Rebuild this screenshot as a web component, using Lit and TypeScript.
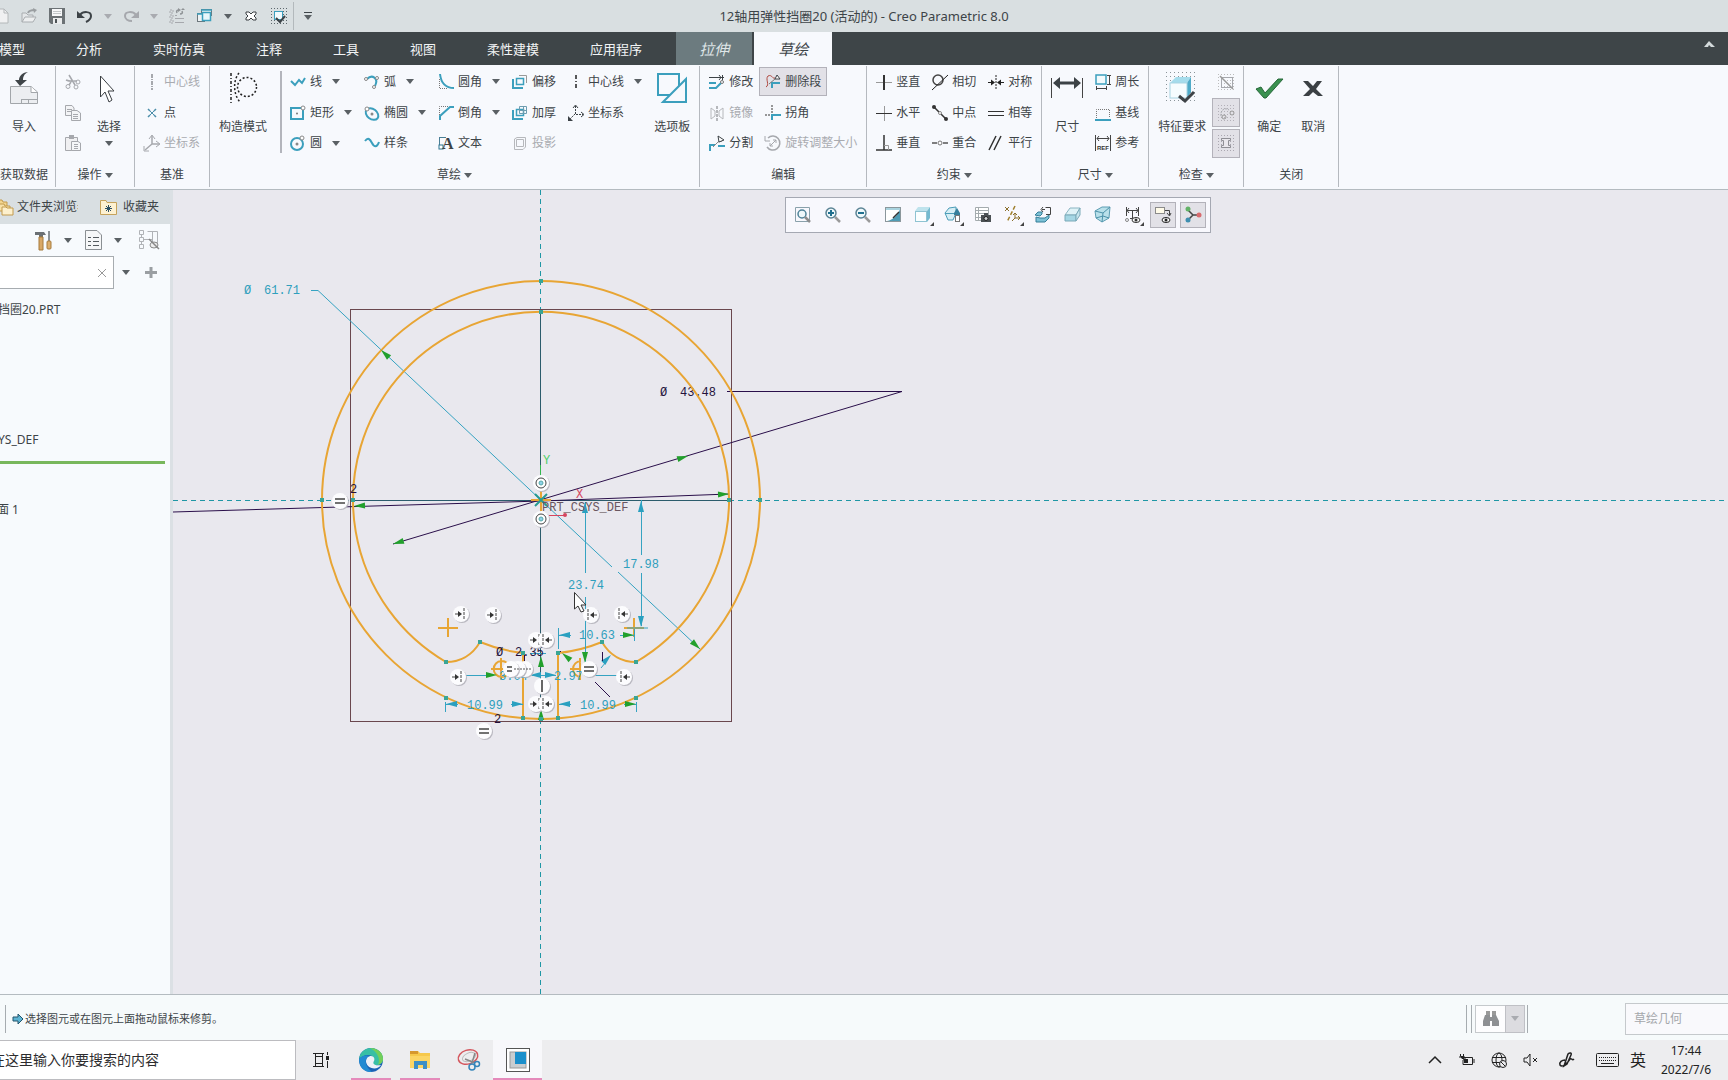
import { LitElement, html, css, svg, nothing, TemplateResult } from "lit";
import { customElement } from "lit/decorators.js";
import { classMap } from "lit/directives/class-map.js";

const T = "#3b9fbd"; // teal stroke
const K = "#3c4246"; // dark stroke
const G = "#a6a8ad"; // disabled stroke

const ico = (size: number, body: unknown, w = size) =>
  html`<svg class="ico" width=${w} height=${size} viewBox="0 0 ${w} ${size}" fill="none" aria-hidden="true">${body}</svg>`;

const caret = html`<svg class="caret" width="8" height="5" viewBox="0 0 8 5" aria-hidden="true"><path d="M0 0H8L4 5Z" fill="currentColor" /></svg>`;

const dots = (n: number, step: number, color: string) =>
  Array.from({ length: n * n }, (_, i) => {
    const x = (i % n) * step, y = Math.floor(i / n) * step;
    return svg`<rect x=${x} y=${y} width="1" height="1" fill=${color} />`;
  });

/* ---------- quick access ---------- */
const qNew = ico(16, svg`<path d="M1 1H11L15 5V15H1Z" fill="#f0f1f2" stroke="#b4b8ba"/><path d="M11 1V5H15" stroke="#b4b8ba"/>`);
const qOpen = ico(16, svg`<path d="M1 14V5H5L7 7H12V9" fill="#e4e7e9" stroke="#a9adb0"/><path d="M1 14L4 9H15L12 14Z" fill="#eceeef" stroke="#a9adb0"/><path d="M7 5C8 2 11 2 14 2" stroke="#9a9ea1" stroke-width="2"/><path d="M12 0L16 2L13 5Z" fill="#9a9ea1"/>`);
const qSave = ico(16, svg`<path d="M0 0H16V16H2L0 14Z" fill="#6c7275"/><rect x="3" y="1" width="10" height="7" fill="#f7f8f9"/><path d="M4 3.500H12M4 5.500H12" stroke="#c3c7c9"/><rect x="4" y="10" width="9" height="6" fill="#e9ebec"/><rect x="6" y="11" width="2" height="4" fill="#4d5356"/>`);
const qUndo = ico(16, svg`<path d="M3 7C6 3 14 3 14 8C14 11 11 13 9 14" stroke="${K}" stroke-width="2"/><path d="M0 3V10H8Z" fill="${K}"/>`);
const qRedo = ico(16, svg`<path d="M13 7C10 3 2 3 2 8C2 11 5 13 9 13" stroke="${G}" stroke-width="2"/><path d="M16 3V10H8Z" fill="${G}"/>`);
const qRegen = ico(16, svg`<path d="M1 2H4V5H1ZM1 7H4V10H1ZM1 12H4V15H1Z" stroke="${G}" stroke-dasharray="2 1"/><path d="M6 10.500H15M6 14.500H15M6 7.500H8" stroke="${G}"/><path d="M8 5C7 3 8 2 10 2M13 3C14 5 13 6 11 6" stroke="#8f9396" stroke-width="1.500"/><path d="M9 0L12 2L9 4ZM12 2H16L14 0Z" fill="#8f9396"/>`);
const qWin = ico(16, svg`<rect x="4.500" y="1.500" width="10" height="6" fill="#eef3f5" stroke="#6d777c"/><path d="M4 2H15" stroke="${T}" stroke-width="1.500"/><rect x="0.500" y="5.500" width="7" height="8" fill="#eef3f5" stroke="#6d777c"/><path d="M0 6H8" stroke="${T}" stroke-width="1.500"/><rect x="5.500" y="4.500" width="8" height="8" fill="#e8f7fb" stroke="${T}" stroke-width="1.500"/>`);
const qClose = ico(16, svg`<path d="M3 4H6L8 6L10 4H13V6L11 8L13 10V12H10L8 10L6 12H3V10L5 8L3 6Z" fill="#fff" stroke="#3a3f42"/>`);
const qCheck = ico(16, svg`${dots(6, 3, "#5d686d")}<rect x="3.500" y="3.500" width="8" height="8" fill="#f2fafd" stroke="${T}"/><path d="M5 10L9 14L14 8" stroke="#3c4347" stroke-width="2"/>`);

/* ---------- ribbon ---------- */
const scissors = ico(16, svg`<path d="M4 1L10 11M1 6C5 8 9 7 12 7M6 8L4 11" stroke="${G}" stroke-width="1.500"/><circle cx="11" cy="13" r="2" stroke="${G}"/><circle cx="3" cy="12.500" r="2" stroke="${G}"/><circle cx="13" cy="8" r="2" stroke="${G}"/>`);
const copy = ico(16, svg`<path d="M0.500 0.500H7L9 3V10.500H0.500Z" fill="#f3f4f6" stroke="${G}"/><path d="M2 4.500H7M2 6.500H6" stroke="${G}"/><path d="M6.500 5.500H12L15.500 8V15.500H6.500Z" fill="#f3f4f6" stroke="${G}"/><path d="M8 9.500H13M8 11.500H13M8 13.500H13" stroke="${G}"/>`);
const paste = ico(16, svg`<path d="M0.500 2.500H12.500V15.500H0.500Z" fill="#f0f0f2" stroke="${G}"/><rect x="4" y="0" width="5" height="4" fill="${G}"/><path d="M6.500 6.500H13L15.500 8V15.500H6.500Z" fill="#f5f6f8" stroke="${G}"/><path d="M9 9.500H13M9 11.500H13M9 13.500H13" stroke="${G}"/>`);
const importI = ico(32, svg`<path d="M2.500 14.500H23L29.500 20V31.500H2.500Z" fill="#eceef1" stroke="#a2a6aa"/><path d="M23 14.500V20.500H29" fill="#fff" stroke="#a2a6aa"/><path d="M13 27.500H29M13.500 27V31M20.500 27V31" stroke="#a2a6aa"/><path d="M20 0C15 0 11 4 11 8H7L12 14L19 8H15C15 5 16 2 20 0Z" fill="#3f4549"/>`);
const pointer = ico(32, svg`<path d="M7.500 4V25L12 20L16 30L19 28L15 19H21Z" fill="#fff" stroke="#3b3f43"/>`);
const datumLine = ico(16, svg`<path d="M8 0V16" stroke="${G}" stroke-width="2" stroke-dasharray="4 1 1 1"/>`);
const datumPt = ico(16, svg`<path d="M4 4L12 12M12 4L4 12" stroke="#4d8fab" stroke-width="1"/><path d="M4 4L6 6M12 4L10 6M4 12L6 10M12 12L10 10" stroke="#4d8fab" stroke-width="1.500"/>`);
const datumCs = ico(16, svg`<path d="M8 1V9L1 15M8 9H15" stroke="${G}" stroke-width="1.500"/><path d="M5 4L8 0L11 4M12 6L16 9L12 12M0 11V16H5" stroke="${G}"/>`);
const construct = ico(32, svg`<path d="M4 1V31" stroke="#222" stroke-width="1.500" stroke-dasharray="3 2 1 2"/><path d="M12 1C6 8 6 22 13 30" stroke="#222" stroke-width="1.500" stroke-dasharray="2 2"/><circle cx="20" cy="15" r="9.500" stroke="#222" stroke-width="1.500" stroke-dasharray="2 2"/>`);
const line = ico(16, svg`<path d="M1 5L5 9L9 4L12 7L15 2" transform="translate(0 2)" stroke="${T}" stroke-width="2"/>`);
const rect = ico(16, svg`<rect x="1" y="3" width="12" height="11" stroke="${T}" stroke-width="2"/><circle cx="7" cy="8.500" r="1" fill="#777"/><circle cx="13" cy="3" r="2" fill="#fff" stroke="#888"/>`);
const circle = ico(16, svg`<circle cx="7" cy="9" r="6" stroke="${T}" stroke-width="2"/><circle cx="7" cy="9" r="1.500" fill="#888"/><circle cx="12" cy="3" r="2" fill="#fff" stroke="#888"/>`);
const arc = ico(16, svg`<path d="M3 5C8 0 15 4 11 12" stroke="${T}" stroke-width="2"/><circle cx="2" cy="5" r="1.500" fill="#fff" stroke="#888"/><circle cx="13" cy="4" r="1.500" fill="#fff" stroke="#888"/><circle cx="10" cy="13" r="1.500" fill="#fff" stroke="#888"/>`);
const ellipse = ico(16, svg`<ellipse cx="8" cy="9" rx="7" ry="5" transform="rotate(38 8 9)" stroke="${T}" stroke-width="2"/><circle cx="8" cy="9" r="1.500" fill="#888"/><circle cx="3" cy="4" r="2" fill="#fff" stroke="#888"/>`);
const spline = ico(16, svg`<path d="M1 6C4 2 6 4 8 8C10 12 13 13 15 7" stroke="${T}" stroke-width="2"/>`);
const fillet = ico(16, svg`<path d="M2 0C3 9 7 14 16 14" stroke="${T}" stroke-width="2"/><path d="M1.500 5V14.500H9" stroke="#777" stroke-dasharray="1 1"/>`);
const chamfer = ico(16, svg`<path d="M2 15V11L12 2H16" stroke="${T}" stroke-width="2"/><path d="M1.500 10V1.500H11" stroke="#777" stroke-dasharray="1 1"/>`);
const textI = html`<svg class="ico" width="16" height="16" viewBox="0 0 16 16" fill="none" aria-hidden="true"><path d="M1.500 2V10M1 2.500H8" stroke="#4a7f96"/><rect x="1" y="10" width="4" height="4" fill="#fff" stroke="#2b7492"/><text x="4" y="14" font-family="Liberation Serif, serif" font-weight="700" font-size="16" fill="#3c4246">A</text></svg>`;
const offset = ico(16, svg`<path d="M1 5V14H11" stroke="${T}" stroke-width="2"/><path d="M4.500 4.500H11.500V10.500H4.500Z" stroke="${T}" stroke-width="1.500"/><path d="M7 1.500H14.500V9" stroke="#999"/>`);
const thicken = ico(16, svg`<path d="M1 5V14H11" stroke="${T}" stroke-width="2"/><path d="M4.500 4.500H11.500V10.500H4.500Z" stroke="${T}" stroke-width="1.500"/><path d="M7.500 1.500H14.500V8.500H7.500ZM11.500 1V8M8 5.500H15" stroke="#6d9db0"/>`);
const project = ico(16, svg`<path d="M2.500 4L5 2.500H13.500V12L11 14.500H2.500ZM4.500 4.500H11.500V11.500H4.500Z" stroke="#b6b8bc"/>`);
const cline = ico(16, svg`<path d="M8 1V16" stroke="#222" stroke-width="1.500" stroke-dasharray="4 2 1 2"/>`);
const csys = ico(16, svg`<path d="M7.500 1V9.500H15M7 9L1 15" stroke="${K}" stroke-dasharray="2 1"/><path d="M5 3L7.500 0L10 3M13 7L16 9.500L13 12" stroke="${K}"/><path d="M0 11V16H5Z" fill="${K}"/>`);
const palette = ico(32, svg`<path d="M2 2H23V23H2Z" stroke="${T}" stroke-width="2"/><path d="M7 30L30 7V30Z" fill="#f7f9fd" stroke="${T}" stroke-width="2"/>`);
const modify = ico(16, svg`<path d="M0 3.500H15M13.500 1V6M10 1L12 3.500L10 6" stroke="${K}"/><path d="M0 9H7M0 14H7L12 9" stroke="${T}" stroke-width="2"/><circle cx="13" cy="8" r="1.500" stroke="#777"/>`);
const mirror = ico(16, svg`<path d="M2 3L6 6V11L2 14ZM14 3L10 6V11L14 14Z" stroke="#b6b8bc"/><path d="M8 1V16" stroke="#b6b8bc" stroke-width="2" stroke-dasharray="3 1"/>`);
const divide = ico(16, svg`<path d="M1 16V10H6M9 11H16" stroke="${T}" stroke-width="2"/><path d="M4 12L9 7L13 6" stroke="#888"/><path d="M9 1L15 5L10 7Z" fill="#fff" stroke="${K}"/>`);
const delSeg = ico(16, svg`<path d="M1 13C5 11 0 5 3 2C7 0 7 5 10 4" stroke="#b0483f"/><path d="M7 14V9H15" stroke="${T}" stroke-width="2"/><path d="M10 5L12 1L15 5Z" fill="#fff" stroke="${K}"/><path d="M4 10L10 5" stroke="#777"/>`);
const corner = ico(16, svg`<path d="M7 15V10H16" stroke="${T}" stroke-width="2"/><path d="M7 0V8M0 10H5" stroke="#777" stroke-width="1.500" stroke-dasharray="2 1"/>`);
const rotate = ico(16, svg`<path d="M3 3A7 7 0 1 1 2 12" stroke="${G}" stroke-width="1.500"/><path d="M0 1V6H5M5 11L11 5M8 5H11V8M5 8V11H8" stroke="${G}"/>`);
const vert = ico(16, svg`<path d="M0 8.500H16" stroke="#999"/><path d="M8 1V16" stroke="#333" stroke-width="2"/>`);
const horiz = ico(16, svg`<path d="M8.500 1V16" stroke="#999"/><path d="M0 8.500H16" stroke="#333"/>`);
const perp = ico(16, svg`<path d="M8 0V15M0 15H16" stroke="#333" stroke-width="1.500"/><path d="M8 10.500H12.500V15" stroke="#999"/>`);
const tangent = ico(16, svg`<circle cx="6" cy="6" r="5" stroke="#444" stroke-width="1.500"/><path d="M0 16L16 1" stroke="#222"/>`);
const mid = ico(16, svg`<path d="M2 2L14 14" stroke="#333" stroke-width="1.500"/><circle cx="2" cy="2" r="2" fill="#333"/><circle cx="14" cy="14" r="2" fill="#333"/><circle cx="8" cy="8" r="1.500" fill="#fff" stroke="#888"/>`);
const coinc = ico(16, svg`<path d="M0 8H5M11 8H16" stroke="#555" stroke-width="1.500"/><circle cx="8" cy="8" r="2" fill="#fff" stroke="#777"/>`);
const symm = ico(16, svg`<path d="M8 1V16" stroke="#222" stroke-dasharray="2 1"/><path d="M0 8.500H5M11 8.500H16" stroke="#222"/><path d="M3 5.500L7 8.500L3 11.500ZM13 5.500L9 8.500L13 11.500Z" fill="#222"/>`);
const equal = ico(16, svg`<path d="M0 6.500H16M0 10.500H16" stroke="#333"/>`);
const para = ico(16, svg`<path d="M1 15L8 1M6 15L13 1" stroke="#333" stroke-width="1.500"/>`);
const dim = ico(32, svg`<path d="M0.500 6V26M31.500 6V26" stroke="#444"/><path d="M6 11H26" stroke="#3c4246" stroke-width="3"/><path d="M2 11L9 5V17ZM30 11L23 5V17Z" fill="#3c4246"/>`);
const perim = ico(16, svg`<rect x="1" y="1" width="10" height="9" fill="#f2fafc" stroke="${T}" stroke-width="1.500"/><path d="M14.500 1V10M12 1.500H16M12 10.500H16M1.500 12V16M11.500 12V16M1 14.500H11" stroke="#444"/>`);
const baseln = ico(16, svg`<path d="M1.500 13V4.500H14.500V13" stroke="#777" stroke-dasharray="1 1"/><path d="M0 15H16" stroke="${T}" stroke-width="2"/>`);
const refI = html`<svg class="ico" width="16" height="16" viewBox="0 0 16 16" fill="none" aria-hidden="true"><path d="M0.500 0V16M15.500 0V16M2 3.500H14M4 1L2 3.500L4 6M12 1L14 3.500L12 6" stroke="#444"/><text x="2" y="15" font-family="Liberation Sans, sans-serif" font-weight="700" font-size="6" fill="#333">REF</text></svg>`;
const cube = ico(32, svg`${dots(8, 4, "#8b9499")}<path d="M4 11L10 5H25L21 11Z" fill="#a5dcec"/><path d="M21 11L25 5V20L21 26Z" fill="#4fabc8"/><rect x="4" y="11" width="17" height="15" fill="#f6fcfe" stroke="#a8d4e2"/><path d="M13 24L19 29L28 20" stroke="#3f4347" stroke-width="3"/>`);
const shade = ico(16, svg`${dots(6, 3, "#bbb")}<rect x="3.500" y="3.500" width="11" height="10" stroke="${G}"/><path d="M2 2L15 15" stroke="#999" stroke-width="1.500"/>`);
const openEnds = ico(16, svg`${dots(6, 3, "#b3b0b8")}<path d="M3 11C2 5 7 2 11 5" stroke="${G}" stroke-dasharray="2 1"/><circle cx="6" cy="12" r="2" stroke="#999"/><circle cx="14" cy="8" r="2" stroke="#999"/>`);
const overlap = ico(16, svg`${dots(6, 3, "#aaa7b0")}<path d="M3.500 3.500H12.500V5.500H10.500V10.500H12.500V12.500H3.500V10.500H5.500V5.500H3.500Z" fill="#e9e7ec" stroke="#8f8f95"/>`);
const okI = ico(32, svg`<path d="M3 17L8 15L12 21L25 7H30L13 26H11Z" fill="#3a9150" stroke="#27683a"/>`);
const cancelI = ico(32, svg`<path d="M6 9H11L16 14L20 9H25L19 17L26 24H21L16 20L12 24H6L13 17Z" fill="#3b4044"/>`);

type Btn = { i: TemplateResult; t?: string; a?: string; caret?: boolean; off?: boolean; on?: boolean };
type Part = { big: Btn } | { col: Btn[] } | { rule: true };
type Group = { t: string; caret?: boolean; edge?: boolean; parts: Part[] };

const groups: Group[] = [
  { t: "获取数据", edge: true, parts: [{ big: { i: importI, t: "导入" } }] },
  { t: "操作", caret: true, parts: [
    { col: [{ i: scissors, a: "剪切", off: true }, { i: copy, a: "复制", off: true }, { i: paste, a: "粘贴", off: true }] },
    { big: { i: pointer, t: "选择", caret: true } } ] },
  { t: "基准", parts: [{ col: [{ i: datumLine, t: "中心线", off: true }, { i: datumPt, t: "点" }, { i: datumCs, t: "坐标系", off: true }] }] },
  { t: "草绘", caret: true, parts: [
    { big: { i: construct, t: "构造模式" } },
    { rule: true },
    { col: [{ i: line, t: "线", caret: true }, { i: rect, t: "矩形", caret: true }, { i: circle, t: "圆", caret: true }] },
    { col: [{ i: arc, t: "弧", caret: true }, { i: ellipse, t: "椭圆", caret: true }, { i: spline, t: "样条" }] },
    { col: [{ i: fillet, t: "圆角", caret: true }, { i: chamfer, t: "倒角", caret: true }, { i: textI, t: "文本" }] },
    { col: [{ i: offset, t: "偏移" }, { i: thicken, t: "加厚" }, { i: project, t: "投影", off: true }] },
    { col: [{ i: cline, t: "中心线", caret: true }, { i: csys, t: "坐标系" }] },
    { big: { i: palette, t: "选项板" } } ] },
  { t: "编辑", parts: [
    { col: [{ i: modify, t: "修改" }, { i: mirror, t: "镜像", off: true }, { i: divide, t: "分割" }] },
    { col: [{ i: delSeg, t: "删除段", on: true }, { i: corner, t: "拐角" }, { i: rotate, t: "旋转调整大小", off: true }] } ] },
  { t: "约束", caret: true, parts: [
    { col: [{ i: vert, t: "竖直" }, { i: horiz, t: "水平" }, { i: perp, t: "垂直" }] },
    { col: [{ i: tangent, t: "相切" }, { i: mid, t: "中点" }, { i: coinc, t: "重合" }] },
    { col: [{ i: symm, t: "对称" }, { i: equal, t: "相等" }, { i: para, t: "平行" }] } ] },
  { t: "尺寸", caret: true, parts: [
    { big: { i: dim, t: "尺寸" } },
    { col: [{ i: perim, t: "周长" }, { i: baseln, t: "基线" }, { i: refI, t: "参考" }] } ] },
  { t: "检查", caret: true, parts: [
    { big: { i: cube, t: "特征要求" } },
    { col: [{ i: shade, a: "着色封闭环", off: true }, { i: openEnds, a: "突出显示开放端", on: true }, { i: overlap, a: "重叠几何", on: true }] } ] },
  { t: "关闭", parts: [{ big: { i: okI, t: "确定" } }, { big: { i: cancelI, t: "取消" } }] },
];

/* ---------- view toolbar ---------- */
const lens = (inner: unknown) => svg`<g transform="translate(1 1)"><path d="M10 10L15 15" stroke="#9a9a9a" stroke-width="2.500"/><circle cx="6" cy="6" r="5" fill="#eef8fb" stroke="#5b8394" stroke-width="1.500"/>${inner}</g>`;
const corn = svg`<path d="M20 16V20H16Z" fill="#444"/>`;
const viewTools: { i: TemplateResult; a: string; on?: boolean }[] = [
  { a: "重新调整", i: ico(18, svg`<path d="M1.500 1.500H15.500V15.500H1.500Z" stroke="#8aa1ab"/><circle cx="8" cy="8" r="4" fill="#eef8fb" stroke="#4f8398" stroke-width="1.500"/><path d="M11 11L16 16" stroke="#8d8d8d" stroke-width="2.500"/>`) },
  { a: "放大", i: ico(18, svg`${lens(svg`<path d="M3 6H9M6 3V9" stroke="#1f6f8f" stroke-width="2"/>`)}`) },
  { a: "缩小", i: ico(18, svg`${lens(svg`<path d="M3 6H9" stroke="#1f6f8f" stroke-width="2"/>`)}`) },
  { a: "重画", i: ico(18, svg`<rect x="1.500" y="1.500" width="15" height="14" fill="#fff" stroke="#8b979c"/><path d="M16 3V15H3C9 14 14 9 16 3Z" fill="#4f9cb5"/><path d="M2 3H16" stroke="#a9d3df" stroke-width="2"/><path d="M9 12L15 6" stroke="#333" stroke-width="1.500"/>`) },
  { a: "显示样式", i: ico(18, svg`<path d="M1 5L4 1H16L13 5Z" fill="#bfe3ed"/><path d="M13 5L16 1V12L13 16Z" fill="#74bad0"/><rect x="1.500" y="5.500" width="11" height="10" fill="#fbfeff" stroke="#8fc3d2"/>${corn}`) },
  { a: "已保存方向", i: ico(18, svg`<path d="M1 7L5 2L12 1V7L9 14H4Z" fill="#d6eef5" stroke="#4c9db8"/><path d="M1 7.500H12" stroke="#4c9db8"/><path d="M10 7L13 2L16 7V9H10Z" fill="#357f9c"/><rect x="11.500" y="9.500" width="4" height="6" fill="#fff" stroke="#777"/>${corn}`) },
  { a: "视图管理器", i: ico(18, svg`<path d="M1.500 1.500H14.500V14.500H1.500ZM1 4.500H14M1 7.500H14M1 11.500H8M4.500 1V15" fill="#fff" stroke="#a4abae"/><rect x="7" y="9" width="10" height="7" fill="#4b5054"/><path d="M10 7H14V9H10Z" fill="#4b5054"/><circle cx="12" cy="12.500" r="2" fill="#cfd3d5" stroke="#222"/>`) },
  { a: "基准显示过滤器", i: ico(18, svg`<path d="M1 1L5 5M5 1L1 5" stroke="#8a6f2d"/><path d="M11 0L3 16" stroke="#a1812f" stroke-width="1.500" stroke-dasharray="4 2"/><path d="M11 7V12H16M11 12L8 15M9 9L11 7L13 9M14 10L16 12L14 14" stroke="#8a6f2d"/>${corn}`) },
  { a: "注释显示", i: ico(18, svg`<path d="M8 3.500H11M9 1L7 3.500L9 6M11.500 1.500H16.500V8.500H12" stroke="#444"/><path d="M1 9L4 6H8V8L6 10ZM2 11V16H11L15 12V9L11 12H6Z" fill="#7cc1d6" stroke="#367f99"/>`) },
  { a: "模拟显示", i: ico(18, svg`<path d="M1 9L6 2H16L12 9Z" fill="#dff2f7" stroke="#8ab4c2"/><path d="M1 9H12V15H1Z" fill="#a5d6e4" stroke="#7ba9b8"/><path d="M12 9L16 2V9L12 15Z" fill="#c4e4ed" stroke="#7ba9b8"/>`) },
  { a: "透视图", i: ico(18, svg`<path d="M1 5L8 1H16L15 12L8 16L2 12Z" fill="#b9e0ea" stroke="#5c9db2"/><path d="M1 5L9 7L16 1M9 7L8 16M2 12L9 10L15 12" stroke="#4d92aa"/>`) },
  { a: "尺寸显示", i: ico(18, svg`<path d="M2.500 1V10M14.500 1V10M2 4.500H14M5 2L3 4.500L5 7M12 2L14 4.500L12 7M8.500 5V12M6 12.500H10" stroke="#444"/><circle cx="3" cy="14" r="1.500" stroke="#888"/><ellipse cx="12" cy="14" rx="4" ry="2.500" fill="#fff" stroke="#333"/><circle cx="12" cy="14" r="1.500" fill="#333"/>${corn}`) },
  { a: "约束显示", on: true, i: ico(18, svg`<rect x="1.500" y="1.500" width="9" height="6" fill="#fffbe9" stroke="#8b8b8b"/><path d="M11 4.500H15.500V9M13 7L15.500 10L17 7" stroke="#444"/><ellipse cx="12" cy="14" rx="4" ry="2.500" fill="#fff" stroke="#222"/><circle cx="12" cy="14" r="1.500" fill="#222"/>`) },
  { a: "顶点显示", on: true, i: ico(18, svg`<path d="M4 4L9 9M9 9H14M9 9L4 14" stroke="#444" stroke-width="1.500"/><circle cx="4" cy="3" r="2.500" fill="#62b267"/><circle cx="15" cy="9" r="2.500" fill="#d86a6e"/><circle cx="4" cy="14" r="2.500" fill="#3f8fb0"/>`) },
];

/* ---------- sketch ---------- */
const CX = 541, CY = 500;
const arrow = (x: number, y: number, deg: number, color: string) =>
  svg`<path d="M0 0L-11 -3V3Z" transform="translate(${x} ${y}) rotate(${deg})" fill=${color} />`;
const badge = (x: number, y: number, mark: unknown) =>
  svg`<g transform="translate(${x} ${y})"><circle cx="1" cy="1" r="8" fill="#b9b8c0"/><circle r="8" fill="#fcfcfe"/>${mark}</g>`;
const toRight = svg`<path d="M-6 0H-2" stroke="#444"/><path d="M-3 -3L1 0L-3 3Z" fill="#333"/><path d="M3 -6V6" stroke="#444" stroke-dasharray="3 1"/>`;
const toLeft = svg`<path d="M6 0H2" stroke="#444"/><path d="M3 -3L-1 0L3 3Z" fill="#333"/><path d="M-3 -6V6" stroke="#444" stroke-dasharray="3 1"/>`;
const eq = svg`<path d="M-5 -2H5M-5 2H5" stroke="#444" stroke-width="1.500"/>`;
const conc = svg`<circle r="5" fill="#fff" stroke="#444"/><circle r="2" fill="#8fd0e8" stroke="#5aa"/>`;
const bar = svg`<path d="M0 -6V6" stroke="#333" stroke-width="1.500"/>`;
const vtx = [[541, 281], [541, 312], [322, 500], [353, 500], [729, 500], [760, 500], [446, 662], [480, 642], [523, 653], [558, 653], [602, 642], [636, 662], [523, 718], [558, 718], [446, 698], [636, 698], [541, 719]];

@customElement("sketch-canvas")
export class SketchCanvas extends LitElement {
  static styles = css`
    :host { display: block; overflow: hidden; background: #e9e8ee; }
    svg { display: block; width: 100%; height: 100%; }
    text { font-family: "Liberation Mono", monospace; font-size: 12px; }
    .thin { stroke-width: 1; fill: none; }
    .cyan { stroke: #35a3c2; }
    .plum { stroke: #2a0f4a; }
    .gold { stroke: #e8a534; stroke-width: 2; fill: none; }
    .tc { fill: #2f9fbd; }
    .tp { fill: #24123c; }
  `;
  render() {
    return html`<svg viewBox="173 190 1555 804" preserveAspectRatio="xMinYMin slice" role="img" aria-label="草绘">
      <g class="thin">
        <path d="M173 500.500H353M729 500.500H1728M540.500 190V312M540.500 719V994" stroke="#1f97a5" stroke-dasharray="5 4" />
        <path d="M353 500.500H729M540.500 312V719" stroke="#2c5c6c" />
        <rect x="350.500" y="309.500" width="381" height="412" stroke="#6a474e" />
        <path class="cyan" d="M311 290.500H318L612 567M618 572L700 649" />
        <path class="plum" d="M727 391.500H902L393 544M173 512L541 501L729 494" />
      </g>
      <text class="tc" x="244" y="294">Ø<tspan x="264">61.71</tspan></text>
      <text class="tp" x="660" y="396">Ø<tspan x="680">43.48</tspan></text>
      <g class="gold">
        <circle cx="541" cy="500" r="219" />
        <path d="M446 662A188 188 0 1 1 636 662" />
        <path d="M446 662C459 662 472 656 480 642A155 155 0 0 0 523 653V718M636 662C623 662 610 656 602 642A155 155 0 0 1 558 653V718" />
        <path d="M448 618V637M438 628H458M634 618V637M624 628H644" />
        <path d="M507 663A8 8 0 1 0 507 675M501 658V680M491 669H511M581 661A8 8 0 0 0 581 677M580 658V680M570 669H590" />
        <path d="M541 490V511M531 500H551" />
      </g>
      ${arrow(381, 350, -137, "#22a02c")}${arrow(700, 649, 43, "#22a02c")}${arrow(688, 456, -17, "#22a02c")}
      ${arrow(393, 544, 163, "#22a02c")}${arrow(354, 506, 178, "#22a02c")}${arrow(729, 494, -2, "#22a02c")}
      <path d="M535 494L547 506M547 494L535 506" stroke="#269a92" stroke-width="2" />
      <g class="thin cyan">
        <path d="M585.500 502V573M585.500 597V662M641.500 500V555M641.500 573V626M627 628H648" />
        <path d="M558.500 628V649M558 635.500H571M620 635.500H634M634.500 629V641" />
        <path d="M445.500 702V712M446 704.500H458M511 704.500H523M559 704.500H571M624 704.500H636M636.500 702V712" />
        <path d="M464 675.500H487M530 675.500H556M592 675.500H618M530 653.500H546M601 668L606 662" />
      </g>
      ${arrow(585, 502, -90, "#2aa0c0")}${arrow(641, 501, -90, "#2aa0c0")}${arrow(641, 627, 90, "#2aa0c0")}${arrow(585, 663, 90, "#22a02c")}
      ${arrow(559, 635, 180, "#2aa0c0")}${arrow(634, 635, 0, "#22a02c")}
      ${arrow(446, 704, 180, "#2aa0c0")}${arrow(523, 704, 0, "#2aa0c0")}${arrow(559, 704, 180, "#2aa0c0")}${arrow(636, 704, 0, "#22a02c")}
      ${arrow(497, 675, 0, "#22a02c")}${arrow(530, 675, 180, "#2aa0c0")}${arrow(556, 675, 0, "#2aa0c0")}
      ${arrow(541, 656, -90, "#22a02c")}${arrow(541, 709, -90, "#22a02c")}${arrow(562, 653, -140, "#22a02c")}${arrow(611, 655, -45, "#2aa0c0")}
      <text class="tc" x="623" y="568">17.98</text>
      <text class="tc" x="568" y="589">23.74</text>
      <text class="tc" x="579" y="639">10.63</text>
      <text class="tc" x="467" y="709">10.99</text>
      <text class="tc" x="580" y="709">10.99</text>
      <text class="tc" x="499" y="680">3.04</text>
      <text class="tc" x="554" y="680">2.97</text>
      <text class="tp" x="496" y="656">Ø<tspan x="515">2.35</tspan></text>
      <path class="thin plum" d="M556 651.500H561M602.500 652V661M595 682L610 697M524.500 653V662" />
      <text class="tp" x="350" y="493">2</text>
      <text class="tp" x="494" y="723">2</text>
      <text x="543" y="464" fill="#4fcf6a">Y</text>
      <path d="M540.500 465V478" stroke="#35b850" />
      <text x="576" y="498" fill="#d6455e">X</text>
      <text x="542" y="511" fill="#6a5660">PRT_CSYS_DEF</text>
      <path d="M549 515.500H564" stroke="#d6455e" /><circle cx="565" cy="515" r="2" fill="#d6455e" />
      ${vtx.map(([x, y]) => svg`<rect x=${x - 2} y=${y - 2} width="4" height="4" fill="#3aa595" />`)}
      ${badge(CX, CY - 17, conc)}${badge(CX, CY + 19, conc)}${badge(340, 501, eq)}${badge(484, 731, eq)}
      ${badge(461, 614, toRight)}${badge(493, 615, toRight)}${badge(591, 615, toLeft)}${badge(622, 614, toLeft)}
      ${badge(536, 640, toRight)}${badge(546, 640, toLeft)}${badge(536, 704, toRight)}${badge(546, 704, toLeft)}
      ${badge(458, 677, toRight)}${badge(624, 677, toLeft)}${badge(542, 686, bar)}
      ${badge(525, 669, nothing)}${badge(518, 669, nothing)}${badge(511, 669, svg`<path d="M-4 -2H1M-4 2H1" stroke="#444" stroke-width="1.500"/><path d="M3 0H21" stroke="#555" stroke-dasharray="2 1"/>`)}${badge(589, 669, eq)}
      <path d="M574.500 592.500V609L578 606L581 612L584 611L581 605H586Z" fill="#fff" stroke="#333" />
    </svg>`;
  }
}

@customElement("app-root")
export class AppRoot extends LitElement {
  static styles = css`
    :host { display: flex; flex-direction: column; min-height: 100vh; overflow: hidden; color: #3d4448;
      font-family: "Noto Sans", "Noto Sans CJK SC", sans-serif; font-size: 12px; line-height: 16px; background: #f7f9fd; }
    * { box-sizing: border-box; }
    button { display: inline-flex; align-items: center; justify-content: center; padding: 0; border: 1px solid transparent;
      background: none; color: inherit; font: inherit; white-space: nowrap; }
    input { font: inherit; color: inherit; border: 0; background: none; outline: 0; padding: 0; }
    .ico, .caret { display: block; flex: none; }
    .ico { overflow: visible; }
    .caret { color: #5a6064; }
    .off { color: #a9abb0; }
    .off .caret { color: #a9abb0; }

    .title { display: grid; grid-template-columns: 1fr auto 1fr; align-items: center; height: 32px; background: #d9dfe1; }
    .title h1 { margin: 0; font-size: 13px; font-weight: 400; line-height: 20px; }
    .quick { display: flex; align-items: center; margin-left: -13px; min-width: 0; }
    .quick button { width: 28px; height: 28px; }
    .quick .drop { width: 18px; }
    .quick .rule { width: 1px; height: 28px; background: #b3b9bc; }
    .quick .more { flex-direction: column; gap: 2px; }
    .quick .more i { width: 8px; height: 1px; background: #3d4448; }

    .tabs { display: flex; align-items: stretch; gap: 1px; height: 33px; background: #3e4548; color: #f2f4f5; font-size: 13px; padding-right: 9px; }
    .tabs button { padding: 0 24px; }
    .tabs button:first-child { margin-left: -26px; }
    .tabs .ctx { font-style: italic; font-size: 15px; padding: 0 23px; border: 0; color: #dfe6e8; }
    .tabs .extrude { background: #6c7b7f; margin-left: 8px; }
    .tabs .sketch { background: #f7f9fd; color: #3d4448; margin-left: 1px; padding: 0 24px; }
    .tabs .fold { margin-left: auto; padding: 0; width: 20px; height: 24px; }

    .ribbon { display: flex; height: 125px; background: #f7f9fd; border-bottom: 1px solid #b4bbc0; padding-top: 1px; }
    .group { display: flex; flex-direction: column; padding: 0 3px; border-right: 1px solid #b5b9bf; margin-bottom: 2px; }
    .edge { padding: 0 7px 0 0; }
    .parts { display: flex; justify-content: center; height: 93px; }
    .col { display: grid; grid-template-rows: 31px 31px 30px; align-content: start; justify-items: start; align-items: center; }
    .small { height: 29px; padding: 0 5px; gap: 4px; }
    .small .caret { margin-left: 6px; }
    .on { background: #e2e1e7; border-color: #b3b2ba; }
    .big { flex-direction: column; justify-content: flex-start; min-width: 44px; padding: 5px 5px 0; height: 93px; }
    .big .ico { margin-bottom: 15px; }
    .big .caret { margin-top: 6px; }
    .sep { width: 2px; height: 82px; margin: 5px 2px 0 7px; background: #b3b5bc; }
    .name { display: flex; align-items: center; justify-content: center; gap: 3px; margin-top: 7px; height: 18px; font-size: 12px; white-space: nowrap; }

    .work { display: flex; flex: 1; min-height: 0; }
    .side { width: 170px; flex: none; background: #f7fafd; overflow: hidden; white-space: nowrap; }
    .grip { width: 3px; flex: none; background: #dbe0e4; }
    .nav { display: flex; height: 34px; align-items: center; background: #d9dfe2; }
    .nav button { gap: 2px; }
    .nav .folders { width: 83px; justify-content: flex-start; overflow: hidden; margin-left: -4px; }
    .nav .fav { margin-left: 20px; gap: 6px; }
    .tools { display: flex; align-items: center; height: 32px; padding-left: 30px; }
    .tools button { width: 26px; height: 26px; }
    .tools .drop { width: 24px; }
    .tools .filter { margin-left: 6px; }
    .find { display: flex; align-items: center; height: 33px; }
    .box { display: flex; align-items: center; width: 114px; height: 33px; background: #fff; border: 1px solid #a7acb0; border-left: 0; }
    .box input { flex: 1; width: 0; height: 30px; }
    .box button { width: 22px; height: 28px; }
    .find .drop { width: 24px; height: 28px; }
    .find .add { width: 26px; height: 28px; }
    .tree { list-style: none; margin: 0; padding: 8px 0 0; font-size: 12px; }
    .tree li { height: 26px; line-height: 26px; }
    .tree .part { margin-left: -2px; margin-bottom: 104px; }
    .tree .cs { margin-left: -2px; }
    .tree .insert { height: 3px; margin: 8px 5px 33px 0; background: #78b75c; }
    .tree .plane { margin-left: -3px; }
    .stage { position: relative; display: flex; flex: 1; min-width: 0; }
    sketch-canvas { flex: 1; min-width: 0; height: 804px; }
    .view { position: absolute; left: 612px; top: 7px; display: flex; gap: 4px; padding: 4px; background: #f8f8fd; border: 1px solid #a5a8b2; }
    .view button { width: 26px; height: 26px; }

    .status { display: flex; align-items: center; height: 46px; border-top: 1px solid #b4bbc0; background: #f6fafb; padding: 2px 0 0 5px; }
    .status .bar { width: 1px; height: 28px; background: #a6acb0; }
    .msg { display: flex; align-items: center; gap: 1px; margin-left: 6px; font-size: 11px; }
    .seek { display: flex; margin: 0 2px 0 3px; }
    .seek button { height: 28px; width: 31px; border: 1px solid #c5c9cc; background: #fdfdfe; }
    .seek .drop { width: 20px; margin-left: -1px; background: #dcdce0; border-color: #bfc0c5; }
    .push { margin-left: auto; }
    .two { display: flex; gap: 4px; }
    .pick { width: 103px; height: 32px; margin-left: 97px; border: 1px solid #c5c9cc; border-right: 0; padding: 0 8px; background: #f9f9fc; color: #a4a7ab; appearance: none; font: inherit; border-radius: 0; opacity: 1; }

    .task { display: flex; align-items: stretch; height: 40px; background: #ededef; color: #222; overflow: hidden; }
    .task .search { flex: none; width: 296px; border: 1px solid #bcbcc0; border-left: 0; background: #fff; overflow: hidden; display: flex; }
    .search input { width: 300px; margin-left: -9px; font-size: 14px; flex: none; }
    .search input::placeholder { color: #2c2c2e; opacity: 1; }
    .task .app { width: 49px; border: 0; border-bottom: 2px solid transparent; padding-top: 2px; }
    .task .view-all { margin-right: 1px; }
    .task .run { background: linear-gradient(#e58abb, #e58abb) center bottom / 40px 2px no-repeat border-box; }
    .task .active { background: #f8f8fb; border-bottom-color: #e58abb; }
    .tray { display: flex; margin-left: auto; padding-right: 5px; }
    .tray button { width: 32px; border: 0; }
    .tray .pen { width: 40px; }
    .tray .keys { width: 40px; }
    .tray .ime { width: 22px; font-size: 16px; }
    .tray .clock { width: 74px; flex-direction: column; line-height: 19px; }
  `;

  private small(b: Btn) {
    return html`<button class=${classMap({ small: true, off: !!b.off, on: !!b.on })} aria-label=${b.a ?? b.t!}>${b.i}${b.t ? html`<span>${b.t}</span>` : nothing}${b.caret ? caret : nothing}</button>`;
  }

  private part(p: Part) {
    if ("rule" in p) return html`<span class="sep"></span>`;
    if ("big" in p) return html`<button class="big">${p.big.i}<span>${p.big.t}</span>${p.big.caret ? caret : nothing}</button>`;
    return html`<div class="col">${p.col.map((b) => this.small(b))}</div>`;
  }

  render() {
    return html`
      <header class="title">
        <div class="quick">
          <button aria-label="新建">${qNew}</button><button aria-label="打开">${qOpen}</button><button aria-label="保存">${qSave}</button>
          <button aria-label="撤消">${qUndo}</button><button class="drop off" aria-label="撤消列表">${caret}</button>
          <button aria-label="重做">${qRedo}</button><button class="drop off" aria-label="重做列表">${caret}</button>
          <button aria-label="重新生成">${qRegen}</button><button aria-label="窗口">${qWin}</button><button class="drop" aria-label="窗口列表">${caret}</button>
          <button aria-label="关闭窗口">${qClose}</button><button aria-label="特征要求">${qCheck}</button>
          <span class="rule"></span><button class="more" aria-label="自定义"><i></i>${caret}</button>
        </div>
        <h1>12轴用弹性挡圈20 (活动的) - Creo Parametric 8.0</h1>
      </header>
      <nav class="tabs">
        ${["模型", "分析", "实时仿真", "注释", "工具", "视图", "柔性建模", "应用程序"].map((t) => html`<button>${t}</button>`)}
        <button class="ctx extrude">拉伸</button><button class="ctx sketch">草绘</button>
        <button class="fold" aria-label="最小化功能区">${ico(6, svg`<path d="M0 6L5 0L11 6H7L5 4L4 6Z" fill="#d3dadb"/>`, 11)}</button>
      </nav>
      <section class="ribbon">
        ${groups.map((g) => html`<div class=${classMap({ group: true, edge: !!g.edge })}>
          <div class="parts">${g.parts.map((p) => this.part(p))}</div>
          <div class="name">${g.t}${g.caret ? caret : nothing}</div>
        </div>`)}
      </section>
      <main class="work">
        <aside class="side">
          <div class="nav">
            <button class="folders">${ico(18, svg`<path d="M0 2H5L6 4H10V10H0Z" fill="#f2d58f" stroke="#c29a4c"/><path d="M2 6H7L8 8H13V13H2Z" fill="#f7e1a8" stroke="#c29a4c"/><path d="M5 9H9L10 10H16V17H5Z" fill="#fdf0cd" stroke="#c29a4c"/>`)}<span>文件夹浏览器</span></button>
            <button class="fav">${ico(16, svg`<path d="M0.500 1.500H6L7 3.500H16.500V15.500H0.500Z" fill="#fdf1d2" stroke="#c6a35c"/><path d="M8.500 6V13M5 9.500H12M6 7L11 12M11 7L6 12" stroke="#2b4f63"/>`, 17)}<span>收藏夹</span></button>
          </div>
          <div class="tools">
            <button aria-label="设置">${ico(20, svg`<path d="M1 2H10L12 5H9V7H5V5H1Z" fill="#6b7074"/><path d="M5 7H9V20H5Z" fill="#d9a866" stroke="#a67a3d"/><path d="M15 1V11" stroke="#8c9296" stroke-width="2"/><rect x="13" y="11" width="4" height="8" rx="1" fill="#dcae6d" stroke="#a67a3d"/>`, 18)}</button>
            <button class="drop" aria-label="设置列表">${caret}</button>
            <button aria-label="显示">${ico(20, svg`<path d="M0.500 0.500H12L16.500 5V19.500H0.500Z" fill="#f6f7f8" stroke="#8a8f93"/><path d="M3 7.500H6M3 11.500H6M3 15.500H6M8 7.500H14M8 11.500H14M8 15.500H14" stroke="#555b5f"/>`, 17)}</button>
            <button class="drop" aria-label="显示列表">${caret}</button>
            <button class="filter" aria-label="树过滤器">${ico(20, svg`<path d="M0.500 0.500H4.500V4.500H0.500ZM0.500 7.500H4.500V11.500H0.500ZM0.500 14.500H4.500V18.500H0.500ZM2.500 5V8M2.500 12V15M5 9.500H13M8.500 1.500H18.500V16.500H13.500V2" stroke="#b0b3b7"/><ellipse cx="15" cy="15" rx="4" ry="3" fill="#eee" stroke="#888"/><path d="M10 9L20 19" stroke="#888" stroke-width="1.500"/>`)}</button>
          </div>
          <div class="find">
            <div class="box"><input aria-label="搜索模型树" /><button aria-label="清除">${ico(8, svg`<path d="M0 0L8 8M8 0L0 8" stroke="#999"/>`)}</button></div>
            <button class="drop" aria-label="搜索选项">${caret}</button>
            <button class="add" aria-label="添加">${ico(12, svg`<path d="M6 0V11M0 5.500H12" stroke="#9a9ea2" stroke-width="3"/>`)}</button>
          </div>
          <ul class="tree">
            <li class="part">挡圈20.PRT</li>
            <li class="cs">YS_DEF</li>
            <li class="insert"></li>
            <li class="plane">面 1</li>
          </ul>
        </aside>
        <div class="grip"></div>
        <div class="stage">
          <sketch-canvas></sketch-canvas>
          <div class="view" role="toolbar">${viewTools.map((v) => html`<button class=${classMap({ on: !!v.on })} aria-label=${v.a}>${v.i}</button>`)}</div>
        </div>
      </main>
      <footer class="status">
        <span class="bar"></span>
        <span class="msg">${ico(12, svg`<path d="M1 4H6V1L11 6L6 11V8H1Z" fill="#5db4d3" stroke="#22556c"/>`)}<span>选择图元或在图元上面拖动鼠标来修剪。</span></span>
        <span class="two push"><span class="bar"></span><span class="bar"></span></span>
        <span class="seek">
          <button aria-label="查找">${ico(16, svg`<path d="M4 0H8V4H4ZM10 0H14V4H10Z" fill="#999"/><path d="M3 4H8V15H1V10ZM10 4H14L17 10V15H10ZM8 6H10V10H8Z" fill="#8e9093"/>`, 18)}</button><button class="drop off" aria-label="查找选项">${caret}</button>
        </span>
        <span class="bar"></span>
        <select class="pick" aria-label="选择过滤器" disabled><option>草绘几何</option></select>
      </footer>
      <footer class="task">
        <label class="search"><input placeholder="在这里输入你要搜索的内容" aria-label="搜索" /></label>
        <button class="app view-all" aria-label="任务视图">${ico(16, svg`<path d="M0 1.500H11M0 14.500H11M2.500 1V4.500H9.500V1M2.500 15V11.500H9.500V15M2.500 4V12M9.500 4V12" stroke="#222"/><path d="M14.500 0V3M14.500 9V16" stroke="#222"/><rect x="13" y="4" width="3" height="4" fill="#222"/>`)}</button>
        <button class="app run" aria-label="Edge">${ico(24, svg`<circle cx="12" cy="12" r="12" fill="#1b62b5"/><path d="M0 11C1 4 6 0 12 0C19 0 24 5 24 11C24 15 21 17 17 17C14 17 13 15 15 13C16 10 13 7 9 7C5 7 2 9 0 11Z" fill="#38bfa5"/><path d="M11 0C18 0 24 4 24 11C24 14 22 16 19 17C22 10 18 4 11 0Z" fill="#73cf5a"/><path d="M7 14C7 10 9 8 12 8C15 8 16 11 15 13C13 16 16 18 22 17C19 22 9 22 7 14Z" fill="#edf1f7"/><path d="M0 11C3 7 8 7 11 8C6 9 6 15 8 18C10 22 14 24 12 24C4 24 0 18 0 11Z" fill="#238bd2"/>`)}</button>
        <button class="app run" aria-label="文件资源管理器">${ico(20, svg`<path d="M1 1H9L11 3H21V18H1Z" fill="#f6c84b"/><path d="M1 1H9V4H1Z" fill="#d6982e"/><path d="M1 6H21V18H1Z" fill="#fbd565"/><path d="M5 11H18V19H14V15H9V19H5Z" fill="#3d8fc6"/>`, 22)}</button>
        <button class="app" aria-label="截图工具">${ico(24, svg`<ellipse cx="11" cy="9" rx="10" ry="7" transform="rotate(-18 11 9)" stroke="#d4575e" stroke-width="1.500"/><ellipse cx="12" cy="9" rx="7" ry="4" transform="rotate(-24 12 9)" stroke="#bbb"/><path d="M18 5L15 15M8 11L18 15" stroke="#888" stroke-width="1.500"/><circle cx="15" cy="19" r="3" stroke="#3585ba" stroke-width="1.500"/><circle cx="20" cy="16" r="2.500" stroke="#3585ba" stroke-width="1.500"/>`)}</button>
        <button class="app active" aria-label="Creo Parametric">${ico(24, svg`<rect x="0.500" y="0.500" width="23" height="23" fill="#fff" stroke="#555"/><rect x="4" y="4" width="16" height="16" fill="#c9cdd0" stroke="#999"/><rect x="9" y="4" width="11" height="12" fill="#1b8fcb"/>`)}</button>
        <div class="tray">
          <button aria-label="显示隐藏的图标">${ico(12, svg`<path d="M0 9L6 3L12 9" stroke="#222" stroke-width="1.500"/>`)}</button>
          <button aria-label="电池">${ico(16, svg`<path d="M5 5.500H13.500V12.500H5M15 7V11" stroke="#222"/><path d="M5 7H9V11H5Z" fill="#222"/><path d="M1.500 2V4M4.500 2V4M0 5H6V7L4 8V12.500H5" stroke="#222"/><path d="M1 4H5V7H3Z" fill="#222"/>`)}</button>
          <button aria-label="网络">${ico(16, svg`<circle cx="8" cy="8" r="7" stroke="#222"/><ellipse cx="8" cy="8" rx="3" ry="7" stroke="#222"/><path d="M1 5.500H15M1 10.500H9" stroke="#222"/><circle cx="12" cy="12" r="3.500" fill="#ededef" stroke="#222"/><path d="M10 10L14 14" stroke="#222"/>`)}</button>
          <button aria-label="音量">${ico(16, svg`<path d="M1 6H4L7 2V14L4 10H1Z" stroke="#222"/><path d="M10 6L14 10M14 6L10 10" stroke="#222"/>`)}</button>
          <button class="pen" aria-label="墨迹">${ico(16, svg`<path d="M6 11L9 2C11 0 13 1 12 3L8 12L5 14ZM6 8C3 8 0 10 1 13C3 16 8 12 11 7C13 6 13 9 15 7" stroke="#222" stroke-width="1.500"/>`)}</button>
          <button class="keys" aria-label="触摸键盘">${ico(14, svg`<rect x="0.500" y="0.500" width="22" height="13" rx="1" stroke="#222"/><path d="M3 4.500H20M3 7.500H20" stroke="#222" stroke-dasharray="1 1"/><path d="M5 10.500H18" stroke="#222"/>`, 23)}</button>
          <button class="ime">英</button>
          <button class="clock"><span>17:44</span><span>2022/7/6</span></button>
        </div>
      </footer>
    `;
  }
}
